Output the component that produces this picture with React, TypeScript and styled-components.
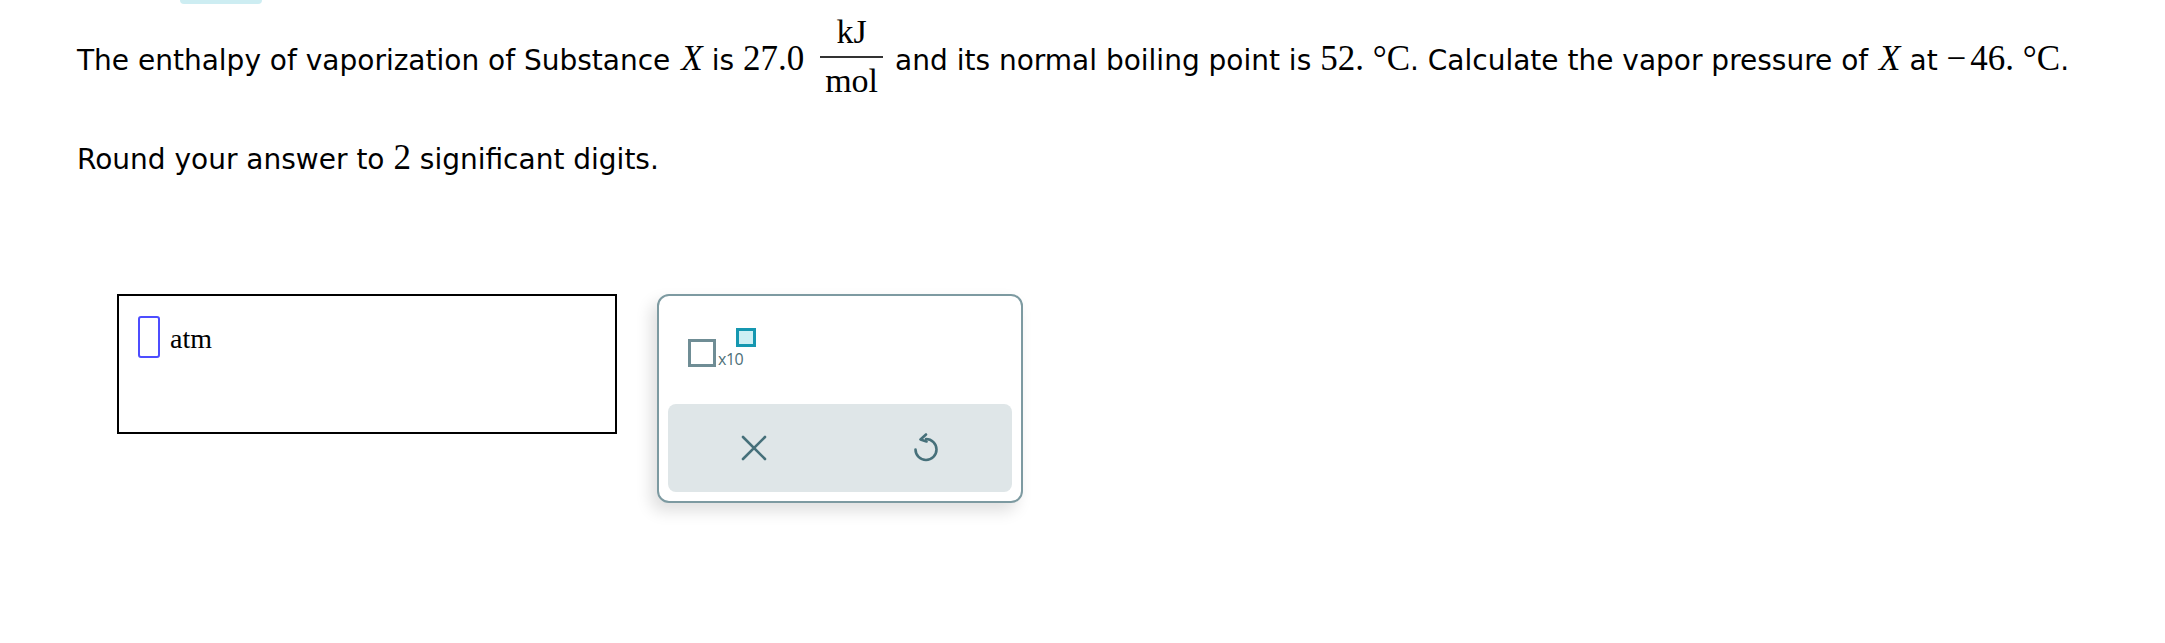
import styled, { createGlobalStyle } from 'styled-components';

const GlobalStyle = createGlobalStyle`
  html, body {
    margin: 0;
    padding: 0;
    background: #fff;
  }
  body {
    font-family: "DejaVu Sans", Verdana, sans-serif;
    color: #000;
  }
`;

const Page = styled.div`
  box-sizing: border-box;
  height: 643px;
  padding-left: 77px;
  overflow: hidden;
`;

// bottom edge of a tab that sits above the visible area
const TopTab = styled.div`
  width: 82px;
  height: 4px;
  margin-left: 103px;
  background: #cdedf2;
  border-radius: 0 0 6px 6px;
`;

const Prompt = styled.p<{ $gap: number }>`
  margin: ${(p) => p.$gap}px 0 0;
  font-size: 28px;
  line-height: 42px;
  white-space: nowrap;
`;

const Math = styled.span<{ $italic?: boolean }>`
  font-family: "Liberation Serif", "Times New Roman", serif;
  font-size: 35px;
  line-height: 32px;
  font-style: ${(p) => (p.$italic ? 'italic' : 'normal')};
  padding: ${(p) => (p.$italic ? '0 9px 0 2px' : '0')};
`;

const Minus = styled.span`
  margin-right: 4px;
`;

const Fraction = styled.span`
  display: inline-flex;
  flex-direction: column;
  align-items: stretch;
  vertical-align: 27px;
  margin: 0 12px 0 16px;
  font-family: "Liberation Serif", "Times New Roman", serif;
  font-size: 34px;
  line-height: 32px;
  text-align: center;
`;

const Numerator = styled.span`
  padding: 0 5px 8px;
`;

const Bar = styled.span`
  height: 2px;
  background: #333;
`;

const Denominator = styled.span`
  padding: 7px 5px 0;
`;

const AnswerRow = styled.div`
  display: flex;
  align-items: flex-start;
  gap: 40px;
  margin: 113px 0 0 40px;
`;

const AnswerBox = styled.div`
  box-sizing: border-box;
  display: flex;
  align-items: flex-start;
  gap: 10px;
  width: 500px;
  height: 140px;
  padding: 20px 19px;
  border: 2px solid #000;
`;

const Slot = styled.span`
  box-sizing: border-box;
  width: 22px;
  height: 42px;
  border: 2.5px solid #4d4dff;
  border-radius: 3px;
`;

const Unit = styled.span`
  font-family: "Liberation Serif", "Times New Roman", serif;
  font-size: 28px;
  line-height: 28px;
  margin-top: 9px;
`;

const Keypad = styled.div`
  box-sizing: border-box;
  display: flex;
  flex-direction: column;
  width: 366px;
  height: 209px;
  padding: 0 9px 9px;
  border: 2px solid #7d9aa1;
  border-radius: 12px;
  background: #fff;
  box-shadow: -6px 8px 16px rgba(0, 0, 0, 0.13);
`;

const KeyArea = styled.div`
  flex: 1;
  display: flex;
  align-items: flex-start;
  padding: 32px 0 0 20px;
`;

const PowerKey = styled.button`
  display: flex;
  align-items: flex-end;
  padding: 0;
  border: none;
  background: none;
  cursor: pointer;
`;

const BaseSquare = styled.span`
  box-sizing: border-box;
  width: 28px;
  height: 28px;
  border: 3px solid #6f8d95;
`;

const PowerColumn = styled.span`
  display: flex;
  flex-direction: column;
  align-items: flex-start;
  margin-left: 2px;
`;

const SupSquare = styled.span`
  box-sizing: border-box;
  width: 20px;
  height: 19px;
  margin-left: 18px;
  margin-bottom: 5px;
  border: 3px solid #1597b0;
  background: #cdeff4;
`;

const PowerLabel = styled.span`
  font-family: "Open Sans", sans-serif;
  font-size: 16px;
  line-height: 15px;
  font-weight: 500;
  color: #4d6f78;
  letter-spacing: -0.5px;
`;

const ActionBar = styled.div`
  display: flex;
  height: 88px;
  background: #dfe6e8;
  border-radius: 8px;
`;

const ActionButton = styled.button`
  flex: 1;
  display: flex;
  align-items: center;
  justify-content: center;
  padding: 0;
  border: none;
  background: none;
  color: #46707a;
  cursor: pointer;
`;

function ClearIcon() {
  return (
    <svg width="26" height="26" viewBox="0 0 26 26" fill="none" stroke="currentColor" strokeWidth="2.6" strokeLinecap="round">
      <path d="M2 2 L24 24 M24 2 L2 24" />
    </svg>
  );
}

function UndoIcon() {
  return (
    <svg width="28" height="30" viewBox="0 0 28 30" fill="none" stroke="currentColor" strokeWidth="2.6" strokeLinecap="round" strokeLinejoin="round">
      <path d="M3.5 16.5 A10.5 10.5 0 1 0 14 6" />
      <path d="M14 1.5 L8.5 6.5 L14.5 8.5" />
    </svg>
  );
}

export default function App() {
  return (
    <>
      <GlobalStyle />
      <Page>
        <TopTab />
        <Prompt $gap={12}>
          The enthalpy of vaporization of Substance <Math $italic>X</Math>is <Math>27.0</Math>
          <Fraction>
            <Numerator>kJ</Numerator>
            <Bar />
            <Denominator>mol</Denominator>
          </Fraction>
          and its normal boiling point is <Math>52. °C</Math>. Calculate the vapor pressure of{' '}
          <Math $italic>X</Math>at{' '}
          <Math>
            <Minus>−</Minus>46. °C
          </Math>
          .
        </Prompt>
        <Prompt $gap={42}>
          Round your answer to <Math>2</Math> significant digits.
        </Prompt>
        <AnswerRow>
          <AnswerBox>
            <Slot />
            <Unit>atm</Unit>
          </AnswerBox>
          <Keypad>
            <KeyArea>
              <PowerKey aria-label="x10 power">
                <BaseSquare />
                <PowerColumn>
                  <SupSquare />
                  <PowerLabel>x10</PowerLabel>
                </PowerColumn>
              </PowerKey>
            </KeyArea>
            <ActionBar>
              <ActionButton aria-label="clear">
                <ClearIcon />
              </ActionButton>
              <ActionButton aria-label="undo">
                <UndoIcon />
              </ActionButton>
            </ActionBar>
          </Keypad>
        </AnswerRow>
      </Page>
    </>
  );
}
